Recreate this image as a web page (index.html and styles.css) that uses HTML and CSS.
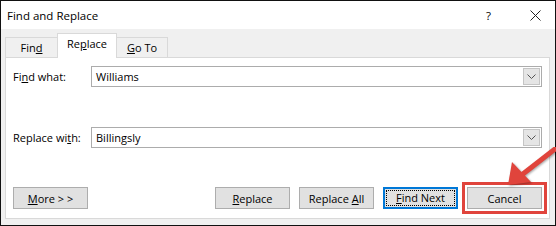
FILE: index.html
```html
<!DOCTYPE html>
<html lang="en">
<head>
    <meta charset="UTF-8">
    <title>Find and Replace</title>
    <link rel="stylesheet" href="styles.css">
</head>
<body>

    <div class="dialog">
        <!-- Title bar -->
        <div class="titlebar">
            <span class="title">Find and Replace</span>
            <span class="help">?</span>
            <svg class="close" width="11" height="11" viewBox="0 0 11 11">
                <path d="M0.5 0.5 L10.5 10.5 M10.5 0.5 L0.5 10.5" stroke="#222" stroke-width="1" fill="none"/>
            </svg>
        </div>

        <!-- Tabs -->
        <div class="tabs">
            <div class="tab tab-find">Fin<u>d</u></div>
            <div class="tab tab-active">Re<u>p</u>lace</div>
            <div class="tab tab-goto"><u>G</u>o To</div>
        </div>

        <div class="panel">
            <div class="row">
                <label class="label">Fi<u>n</u>d what:</label>
                <div class="combo">
                    <span class="value">Williams</span>
                    <span class="drop">
                        <svg width="9" height="5" viewBox="0 0 9 5"><path d="M0.5 0.5 L4.5 4.5 L8.5 0.5" stroke="#555" fill="none"/></svg>
                    </span>
                </div>
            </div>

            <div class="row row-replace">
                <label class="label">Replace wi<u>t</u>h:</label>
                <div class="combo">
                    <span class="value">Billingsly</span>
                    <span class="drop">
                        <svg width="9" height="5" viewBox="0 0 9 5"><path d="M0.5 0.5 L4.5 4.5 L8.5 0.5" stroke="#555" fill="none"/></svg>
                    </span>
                </div>
            </div>

            <div class="buttons">
                <button class="btn"><u>M</u>ore &gt; &gt;</button>
                <div class="spacer"></div>
                <button class="btn"><u>R</u>eplace</button>
                <button class="btn">Replace <u>A</u>ll</button>
                <button class="btn btn-default"><span class="focus"><u>F</u>ind Next</span></button>
                <button class="btn btn-cancel">Cancel</button>
            </div>
        </div>

        <!-- annotation arrow -->
        <svg class="arrow" width="60" height="45" viewBox="0 0 60 45">
            <path d="M58 2 L22 30" stroke="#e0443c" stroke-width="5" stroke-linecap="round" fill="none"/>
            <path d="M11 38 L15 15 L34 35 Z" fill="#e0443c"/>
        </svg>
    </div>

</body>
</html>
```

FILE: styles.css
```css
body {
    margin: 0;
    padding: 0;
    font-family: "Open Sans", "Noto Sans", sans-serif;
    font-size: 11px;
    color: #000;
}
.dialog {
    position: relative;
    width: 556px;
    height: 226px;
    box-sizing: border-box;
    border: 1px solid #111;
    background-color: #f0f0f0;
}
.titlebar {
    height: 28px;
    background-color: #fff;
    display: flex;
    align-items: center;
    padding-left: 6px;
    font-size: 11.5px;
}
.title {
    flex: 1;
}
.help {
    width: 14px;
    margin-right: 30px;
}
.close {
    margin-right: 14px;
}
.tabs {
    display: flex;
    align-items: flex-end;
    padding-left: 4px;
    margin-top: 4px;
    height: 24px;
}
.tab {
    height: 20px;
    box-sizing: border-box;
    border: 1px solid #d9d9d9;
    border-bottom: none;
    text-align: center;
    line-height: 19px;
    background-color: #f0f0f0;
}
.tab-find {
    width: 52px;
    border-right: none;
}
.tab-active {
    width: 60px;
    height: 25px;
    margin-bottom: -1px;
    background-color: #fff;
    line-height: 20px;
    position: relative;
}
.tab-goto {
    width: 51px;
    border-left: none;
}
.panel {
    margin: 0 5px 0 4px;
    height: 162px;
    box-sizing: border-box;
    background-color: #fff;
    border: 1px solid #d9d9d9;
    padding: 8px 7px 0 7px;
}
.row {
    display: flex;
    align-items: center;
    height: 21px;
}
.row-replace {
    margin-top: 40px;
}
.label {
    width: 78px;
}
.combo {
    flex: 1;
    height: 21px;
    box-sizing: border-box;
    border: 1px solid #acacac;
    display: flex;
    align-items: center;
    padding: 1px;
}
.value {
    flex: 1;
    padding-left: 3px;
}
.drop {
    width: 17px;
    height: 17px;
    box-sizing: border-box;
    background-color: #e5e5e5;
    border: 1px solid #c5c5c5;
    display: flex;
    align-items: center;
    justify-content: center;
}
.buttons {
    display: flex;
    margin-top: 39px;
    gap: 9px;
}
.spacer {
    flex: 1;
}
.btn {
    width: 75px;
    height: 22px;
    box-sizing: border-box;
    background-color: #e1e1e1;
    border: 1px solid #adadad;
    font-family: inherit;
    font-size: 11px;
    padding: 0;
    color: #000;
}
.btn-default {
    border: 2px solid #0078d7;
    padding: 1px;
}
.focus {
    display: block;
    height: 100%;
    box-sizing: border-box;
    border: 1px dotted #000;
    line-height: 14px;
}
.btn-cancel {
    outline: 3px solid #e0443c;
    outline-offset: 2px;
}
.arrow {
    position: absolute;
    left: 496px;
    top: 146px;
    filter: drop-shadow(1px 1px 1px rgba(0, 0, 0, 0.35));
}
```
